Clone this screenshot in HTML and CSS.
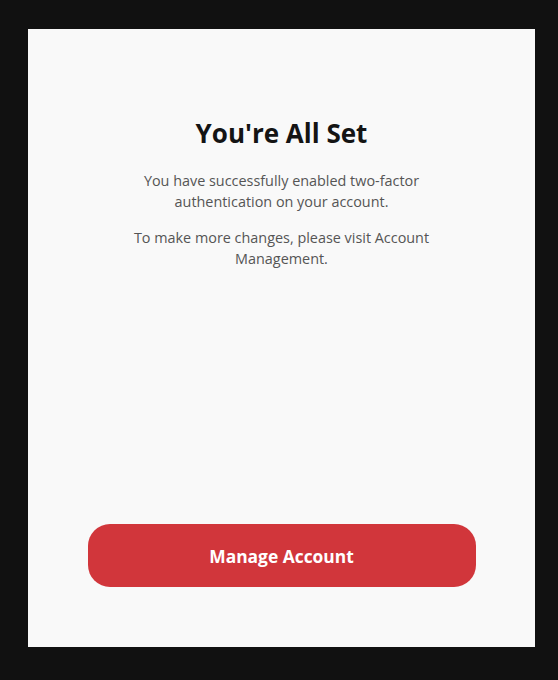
FILE: index.html
```html
<!DOCTYPE html>
<html>
<head>
<meta charset="utf-8">
<link rel="stylesheet" href="styles.css">
</head>
<body>
<div class="card">
  <h1 class="title">You're All Set</h1>
  <p class="text">You have successfully enabled two-factor<br>authentication on your account.</p>
  <p class="text">To make more changes, please visit Account<br>Management.</p>
  <button class="btn">Manage Account</button>
</div>
</body>
</html>
```
FILE: styles.css
```css
html, body {
  margin: 0;
  padding: 0;
  background: #111111;
  height: 100%;
}
body {
  font-family: "Open Sans", Lato, sans-serif;
}
.card {
  margin: 29px 0 0 28px;
  width: 507px;
  height: 618px;
  background: #f9f9f9;
  box-sizing: border-box;
  display: flex;
  flex-direction: column;
  align-items: center;
  padding-top: 88px;
  padding-bottom: 60px;
}
.title {
  margin: 0 0 21px 0;
  font-size: 26px;
  line-height: 32px;
  font-weight: 700;
  color: #141414;
}
.text {
  margin: 0 0 15px 0;
  font-size: 14.4px;
  line-height: 21px;
  color: #555555;
  text-align: center;
}
.btn {
  margin-top: auto;
  width: 388px;
  height: 63px;
  border: none;
  border-radius: 22px;
  background: #d1363b;
  color: #ffffff;
  font-family: "Open Sans", sans-serif;
  font-weight: 700;
  font-size: 17.4px;
}
```
